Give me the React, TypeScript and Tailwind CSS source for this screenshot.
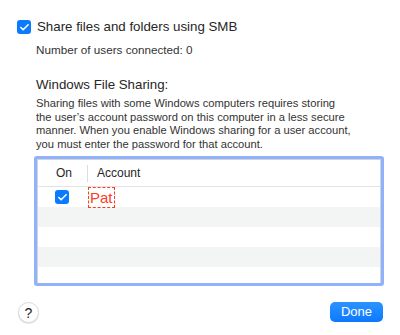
import { Check } from "lucide-react";

const Checkbox = () => (
    <div className="w-[14px] h-[14px] rounded-[3px] bg-[#0a7aff] flex items-center justify-center shrink-0">
        <Check className="size-[11px] text-white" strokeWidth={3.5} />
    </div>
);

const rows = [0, 1, 2, 3, 4];

const App = () => {
    return (
        <div
            className="w-[400px] h-[335px] bg-white text-[#262626] overflow-hidden"
            style={{ fontFamily: '"Liberation Sans", Arial, sans-serif' }}
        >
            <div className="flex items-center gap-[6px] h-[14px] mt-[20px] ml-[17px]">
                <Checkbox />
                <span className="text-[13.3px] leading-[16px]">Share files and folders using SMB</span>
            </div>

            <div className="pl-[36px]">
                <p className="text-[11.7px] leading-[13px] mt-[9px] text-[#333]">Number of users connected: 0</p>

                <p className="text-[13.3px] leading-[16px] mt-[21px]">Windows File Sharing:</p>
                <p className="text-[11.2px] leading-[13.5px] mt-[4px] text-[#333] whitespace-nowrap">
                    Sharing files with some Windows computers requires storing
                    <br />
                    the user’s account password on this computer in a less secure
                    <br />
                    manner. When you enable Windows sharing for a user account,
                    <br />
                    you must enter the password for that account.
                </p>

                {/* account table */}
                <div className="-ml-[2px] mt-[5px] w-[350px] h-[130px] rounded-[3px] border-[3px] border-[#90b2fc] overflow-hidden">
                    <div className="h-full border border-[#d4d4d4] bg-white">
                        <div className="flex items-center h-[27px] border-b border-[#e3e3e3] text-[12px]">
                            <div className="w-[49px] pl-[18px]">On</div>
                            <div className="h-[17px] w-px bg-[#dcdcdc]" />
                            <div className="pl-[9px]">Account</div>
                        </div>
                        {rows.map((r) => (
                            <div
                                key={r}
                                className={`flex items-center h-[20px] ${r % 2 === 1 ? "bg-[#f3f4f4]" : "bg-white"}`}
                            >
                                {r === 0 && (
                                    <>
                                        <div className="w-[50px] pl-[17px]">
                                            <Checkbox />
                                        </div>
                                        <div className="h-[21px] px-[1px] border border-dashed border-[#ff3b22] text-[#ff3b22] text-[15px] leading-[19px]">
                                            Pat
                                        </div>
                                    </>
                                )}
                            </div>
                        ))}
                    </div>
                </div>
            </div>

            <div className="flex items-center justify-between pl-[18px] pr-[17px] mt-[16px]">
                <button className="w-[21px] h-[21px] rounded-full bg-white border border-[#d9d9d9] shadow-[0_1px_1px_rgba(0,0,0,0.12)] text-[14px] leading-none flex items-center justify-center text-[#222]">
                    ?
                </button>
                <button className="w-[53px] h-[20px] -mt-[2px] rounded-[5px] bg-gradient-to-b from-[#2b93ff] to-[#0a78ff] text-white text-[13px] leading-none flex items-center justify-center">
                    Done
                </button>
            </div>
        </div>
    );
};

export default App;
